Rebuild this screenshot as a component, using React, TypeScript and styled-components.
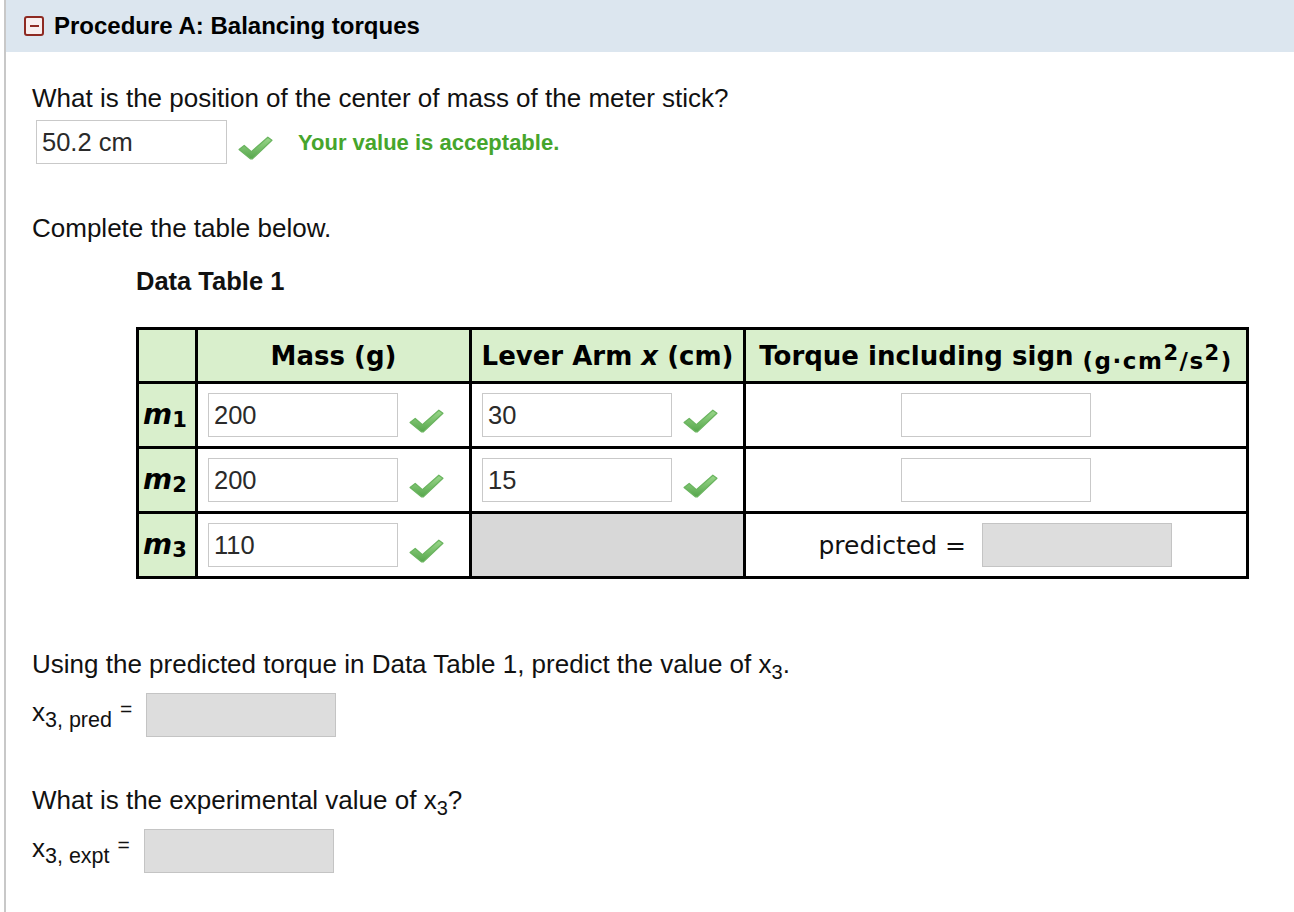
import React from "react";
import styled, { createGlobalStyle } from "styled-components";

const Global = createGlobalStyle`
  html, body { margin: 0; padding: 0; background: #fff; }
  body { font-family: "Liberation Sans", Arial, sans-serif; color: #111; }
`;

const Page = styled.div`
  margin-left: 4px;
  border-left: 2px solid #c8c8c8;
  min-height: 912px;
  box-sizing: border-box;
`;

const Header = styled.div`
  height: 52px;
  background: #dce6ef;
  display: flex;
  align-items: center;
  padding-left: 18px;
  gap: 10px;
`;

const CollapseIcon = styled.span`
  width: 16px;
  height: 16px;
  border: 2px solid #8e2a22;
  border-radius: 3px;
  background: #f7efef;
  display: flex;
  align-items: center;
  justify-content: center;
  &::after {
    content: "";
    width: 9px;
    height: 2px;
    background: #8e2a22;
  }
`;

const Title = styled.h2`
  margin: 0;
  font-size: 24px;
  font-weight: bold;
  color: #000;
`;

const Body = styled.div`
  padding: 0 0 0 26px;
`;

const Question = styled.p<{ $top: number }>`
  margin: ${(p) => p.$top}px 0 0;
  font-size: 26px;
  line-height: 30px;
  color: #111;
`;

const AnswerRow = styled.div<{ $top: number }>`
  display: flex;
  align-items: center;
  margin-top: ${(p) => p.$top}px;
`;

const TextBox = styled.div<{ $gray?: boolean; $w?: number }>`
  width: ${(p) => p.$w ?? 190}px;
  height: 44px;
  box-sizing: border-box;
  border: 1px solid ${(p) => (p.$gray ? "#c4c4c4" : "#c9c9c9")};
  background: ${(p) => (p.$gray ? "#dddddd" : "#fff")};
  font-family: "Liberation Sans", Arial, sans-serif;
  font-size: 25.5px;
  color: #2a2a2a;
  display: flex;
  align-items: center;
  padding-left: 5px;
  flex-shrink: 0;
`;

const Accept = styled.span`
  color: #46a52c;
  font-weight: bold;
  font-size: 22px;
  margin-left: 24px;
  margin-top: 2px;
`;

const CheckWrap = styled.span`
  display: inline-flex;
  margin-left: 10px;
  margin-top: 10px;
`;

const Check = () => (
  <CheckWrap>
    <svg width="37" height="27" viewBox="0 0 36 26">
      <defs>
        <linearGradient id="cg" x1="0" y1="0" x2="0" y2="1">
          <stop offset="0" stopColor="#9bd88b" />
          <stop offset="1" stopColor="#56a64c" />
        </linearGradient>
      </defs>
      <path
        d="M2 15 L7 11 L14 17 L30 3 L34 6 L15 24 L13 24 Z"
        fill="url(#cg)"
        stroke="#6ab45f"
        strokeWidth="1.2"
        strokeLinejoin="round"
      />
    </svg>
  </CheckWrap>
);

const TableCaption = styled.div`
  margin: 23px 0 0 104px;
  font-weight: bold;
  font-size: 25.5px;
  line-height: 30px;
  color: #111;
`;

const Table = styled.table`
  margin: 31px 0 0 104px;
  width: 1110px;
  table-layout: fixed;
  border-collapse: collapse;
  border: 3px solid #000;
  font-family: "DejaVu Sans", Verdana, sans-serif;
`;

const Th = styled.th`
  height: 51px;
  padding: 0;
  border: 3px solid #000;
  background: #d9efcc;
  font-size: 26px;
  font-weight: bold;
  color: #000;
  text-align: center;
  white-space: nowrap;
`;

const Unit = styled.span`
  font-size: 23px;
  position: relative;
  top: 4px;
  letter-spacing: 1.5px;
`;

const Sup = styled.sup`
  font-size: 21px;
  line-height: 0;
`;

const RowLabel = styled.td`
  height: 62px;
  padding: 0 0 0 4px;
  border: 3px solid #000;
  background: #d9efcc;
  font-weight: bold;
  font-size: 28px;
  color: #000;
  vertical-align: middle;
  white-space: nowrap;
  & i { font-style: italic; }
  & sub { font-size: 21px; vertical-align: -3px; }
`;

const Cell = styled.td<{ $gray?: boolean; $center?: boolean }>`
  padding: 0 0 0 ${(p) => (p.$center ? 0 : 10)}px;
  border: 3px solid #000;
  background: ${(p) => (p.$gray ? "#d8d8d8" : "#fff")};
  vertical-align: middle;
`;

const CellInner = styled.div<{ $center?: boolean; $right?: boolean }>`
  display: flex;
  align-items: center;
  justify-content: ${(p) => (p.$center ? "center" : p.$right ? "flex-end" : "flex-start")};
  padding-right: ${(p) => (p.$right ? 74 : 0)}px;
`;

const Predicted = styled.span`
  font-family: "DejaVu Sans", Verdana, sans-serif;
  font-size: 25px;
  color: #111;
  margin-right: 16px;
`;

const VarLabel = styled.span`
  font-size: 26px;
  color: #111;
  margin-right: 14px;
  white-space: nowrap;
  & sub { font-size: 21.5px; vertical-align: -6px; }
  & .eq { font-size: 21px; vertical-align: 5px; margin-left: 8px; }
`;

const InlineSub = styled.sub`
  font-size: 20px;
  vertical-align: -6px;
  line-height: 0;
`;

export default function App() {
  return (
    <>
      <Global />
      <Page>
        <Header>
          <CollapseIcon />
          <Title>Procedure A: Balancing torques</Title>
        </Header>
        <Body>
          <Question $top={31}>What is the position of the center of mass of the meter stick?</Question>
          <AnswerRow $top={7}>
            <TextBox $w={191} style={{ marginLeft: 4 }}>50.2 cm</TextBox>
            <Check />
            <Accept>Your value is acceptable.</Accept>
          </AnswerRow>

          <Question $top={49}>Complete the table below.</Question>
          <TableCaption>Data Table 1</TableCaption>

          <Table>
            <colgroup>
              <col style={{ width: 59 }} />
              <col style={{ width: 274 }} />
              <col style={{ width: 274 }} />
              <col style={{ width: 503 }} />
            </colgroup>
            <thead>
              <tr>
                <Th></Th>
                <Th>Mass (g)</Th>
                <Th>
                  Lever Arm <i>x</i> (cm)
                </Th>
                <Th>
                  Torque including sign{" "}
                  <Unit>
                    (g·cm<Sup>2</Sup>/s<Sup>2</Sup>)
                  </Unit>
                </Th>
              </tr>
            </thead>
            <tbody>
              <tr>
                <RowLabel>
                  <i>m</i>
                  <sub>1</sub>
                </RowLabel>
                <Cell>
                  <CellInner>
                    <TextBox>200</TextBox>
                    <Check />
                  </CellInner>
                </Cell>
                <Cell>
                  <CellInner>
                    <TextBox>30</TextBox>
                    <Check />
                  </CellInner>
                </Cell>
                <Cell $center>
                  <CellInner $center>
                    <TextBox />
                  </CellInner>
                </Cell>
              </tr>
              <tr>
                <RowLabel>
                  <i>m</i>
                  <sub>2</sub>
                </RowLabel>
                <Cell>
                  <CellInner>
                    <TextBox>200</TextBox>
                    <Check />
                  </CellInner>
                </Cell>
                <Cell>
                  <CellInner>
                    <TextBox>15</TextBox>
                    <Check />
                  </CellInner>
                </Cell>
                <Cell $center>
                  <CellInner $center>
                    <TextBox />
                  </CellInner>
                </Cell>
              </tr>
              <tr>
                <RowLabel>
                  <i>m</i>
                  <sub>3</sub>
                </RowLabel>
                <Cell>
                  <CellInner>
                    <TextBox>110</TextBox>
                    <Check />
                  </CellInner>
                </Cell>
                <Cell $gray />
                <Cell $center>
                  <CellInner $right>
                    <Predicted>predicted =</Predicted>
                    <TextBox $gray />
                  </CellInner>
                </Cell>
              </tr>
            </tbody>
          </Table>

          <Question $top={70}>
            Using the predicted torque in Data Table 1, predict the value of x<InlineSub>3</InlineSub>.
          </Question>
          <AnswerRow $top={14}>
            <VarLabel>
              x<sub>3, pred</sub>
              <span className="eq">=</span>
            </VarLabel>
            <TextBox $gray />
          </AnswerRow>

          <Question $top={48}>
            What is the experimental value of x<InlineSub>3</InlineSub>?
          </Question>
          <AnswerRow $top={14}>
            <VarLabel>
              x<sub>3, expt</sub>
              <span className="eq">=</span>
            </VarLabel>
            <TextBox $gray />
          </AnswerRow>
        </Body>
      </Page>
    </>
  );
}
